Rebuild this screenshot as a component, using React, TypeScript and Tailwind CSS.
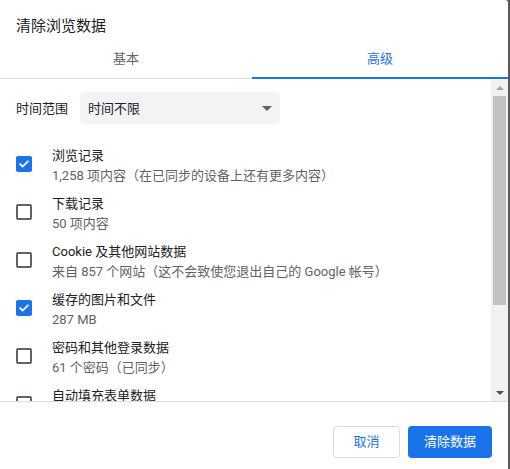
const ROWS = [
  { id: "history", title: "浏览记录", detail: "1,258 项内容（在已同步的设备上还有更多内容）", checked: true },
  { id: "downloads", title: "下载记录", detail: "50 项内容", checked: false },
  { id: "cookies", title: "Cookie 及其他网站数据", detail: "来自 857 个网站（这不会致使您退出自己的 Google 帐号）", checked: false },
  { id: "cache", title: "缓存的图片和文件", detail: "287 MB", checked: true },
  { id: "passwords", title: "密码和其他登录数据", detail: "61 个密码（已同步）", checked: false },
  { id: "autofill", title: "自动填充表单数据", detail: "", checked: false },
];

function Checkbox({ checked }: { checked: boolean }) {
  if (checked) {
    return (
      <div className="w-4 h-4 shrink-0 rounded-[2px] bg-[#1a73e8] flex items-center justify-center">
        <svg width="12" height="12" viewBox="0 0 12 12" fill="none">
          <path d="M2.2 6.2l2.4 2.4L9.8 3.4" stroke="white" strokeWidth="1.8" strokeLinecap="square" />
        </svg>
      </div>
    );
  }
  return <div className="w-4 h-4 shrink-0 rounded-[2px] border-2 border-[#5f6368]" />;
}

function ScrollTrack() {
  return (
    <div className="w-[17px] shrink-0 bg-[#f1f1f1] flex flex-col items-center">
      <div className="h-[17px] w-full flex items-center justify-center">
        <div className="w-0 h-0 border-x-[4px] border-x-transparent border-b-[4px] border-b-[#a3a3a3]" />
      </div>
      <div className="w-[13px] h-[209px] bg-[#c1c1c1]" />
      <div className="flex-1" />
      <div className="h-[17px] w-full flex items-center justify-center">
        <div className="w-0 h-0 border-x-[4px] border-x-transparent border-t-[4px] border-t-[#505050]" />
      </div>
    </div>
  );
}

export default function App() {
  return (
    <div
      className="flex w-[510px] h-[469px] bg-[#5a5a5a] overflow-hidden"
      style={{ fontFamily: 'Roboto, "Noto Sans CJK SC", sans-serif' }}
    >
      <div className="w-[508px] h-full bg-white rounded-tr-[3px] flex flex-col">
        <div className="h-[39px] pt-4 pl-4 text-[15px] leading-5 text-[#202124]">清除浏览数据</div>

        <div className="flex border-b border-[#dadce0] text-[13px]">
          <div className="w-[252px] h-10 -mb-px flex items-center justify-center pt-[2px] border-b-2 border-transparent text-[#5f6368]">
            基本
          </div>
          <div className="flex-1 h-10 -mb-px flex items-center justify-center pt-[2px] border-b-2 border-[#1a73e8] text-[#1a73e8]">
            高级
          </div>
        </div>

        <div className="h-[322px] flex">
          <div className="flex-1 overflow-hidden pt-[13px]">
            <div className="flex items-center pl-4 gap-3 text-[13px]">
              <span className="text-[#202124] pt-px">时间范围</span>
              <div className="w-[200px] h-8 rounded bg-[#f1f3f4] flex items-center justify-between pl-2 pr-[8px] text-[#202124]">
                <span className="pt-px">时间不限</span>
                <div className="w-0 h-0 border-x-[5px] border-x-transparent border-t-[5px] border-t-[#5f6368]" />
              </div>
            </div>

            <div className="mt-4">
              {ROWS.map((row) => (
                <div key={row.id} className="h-12 flex items-center pl-4 gap-5">
                  <Checkbox checked={row.checked} />
                  <div className="text-[13px] leading-5 whitespace-nowrap pt-[3px]">
                    <div className="text-[#202124]">{row.title}</div>
                    <div className="text-[#5f6368]">{row.detail || "\u00a0"}</div>
                  </div>
                </div>
              ))}
            </div>
          </div>
          <ScrollTrack />
        </div>

        <div className="flex-1 border-t border-[#dadce0] flex justify-end items-start gap-2 pt-6 pr-4 text-[13px]">
          <button className="w-[67px] h-8 rounded border border-[#dadce0] bg-white text-[#1a73e8]">取消</button>
          <button className="w-[84px] h-8 rounded bg-[#1a73e8] text-white">清除数据</button>
        </div>
      </div>
    </div>
  );
}
